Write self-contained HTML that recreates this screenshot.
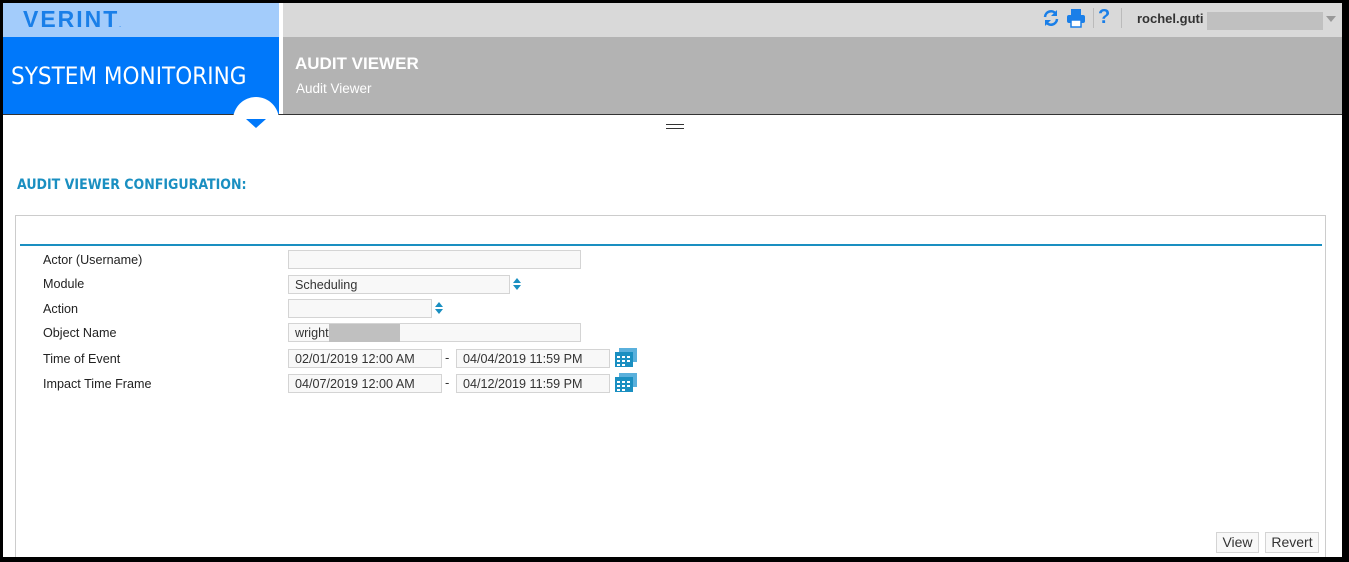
<!DOCTYPE html>
<html><head><style>
*{margin:0;padding:0;box-sizing:border-box}
body{width:1349px;height:562px;background:#000;position:relative;overflow:hidden;font-family:"Liberation Sans",Arial,sans-serif}
.a{position:absolute}
.inp{position:absolute;background:#f8f8f8;border:1px solid #d4d4d4;font-size:12.6px;color:#333;padding:2px 6px;height:19px;line-height:14px}
.lbl{position:absolute;left:43px;font-size:12.6px;color:#222}
.spin{position:absolute;width:10px;height:14px}
.btn{position:absolute;background:#f8f8f8;border:1px solid #d4d4d4;font-size:14px;color:#333;height:21px;line-height:19px;text-align:center}
</style></head><body>
<div class="a" style="left:3px;top:3px;width:1339px;height:554px;background:#fff"></div>
<div class="a" style="left:3px;top:3px;width:276px;height:34px;background:#a3ccfb"></div>
<div class="a" style="left:23px;top:6px;font-size:23px;font-weight:bold;color:#1a7fe8;letter-spacing:2px">VERINT<span style="font-size:5px">.</span></div>
<div class="a" style="left:3px;top:37px;width:276px;height:77px;background:#0078fa"></div>
<div class="a" style="left:11px;top:62px;font-size:24px;color:#fff;font-family:'DejaVu Sans Condensed','DejaVu Sans',sans-serif">SYSTEM MONITORING</div>
<div class="a" style="left:283px;top:3px;width:1059px;height:34px;background:#d9d9d9"></div>
<div class="a" style="left:283px;top:37px;width:1059px;height:77px;background:#b3b3b3"></div>
<div class="a" style="left:3px;top:114px;width:1339px;height:1px;background:#333"></div>
<div class="a" style="left:295px;top:54px;font-size:17px;font-weight:bold;color:#fff">AUDIT VIEWER</div>
<div class="a" style="left:296px;top:81px;font-size:13.5px;color:#fff">Audit Viewer</div>
<div class="a" style="left:233px;top:97px;width:46px;height:46px;border-radius:50%;background:#fff"></div>
<div class="a" style="left:246px;top:119px;width:0;height:0;border-left:10px solid transparent;border-right:10px solid transparent;border-top:9px solid #0078fa"></div>
<div class="a" style="left:666px;top:124px;width:18px;height:1px;background:#333"></div>
<div class="a" style="left:666px;top:128px;width:18px;height:1px;background:#333"></div>
<svg class="a" style="left:1042px;top:9px" width="18" height="18" viewBox="0 0 18 18"><path d="M3 8a6 6 0 0 1 11-3" stroke="#1a7fe8" stroke-width="2.5" fill="none"/><path d="M15 1v6h-6z" fill="#1a7fe8"/><path d="M15 10a6 6 0 0 1-11 3" stroke="#1a7fe8" stroke-width="2.5" fill="none"/><path d="M3 17v-6h6z" fill="#1a7fe8"/></svg>
<svg class="a" style="left:1066px;top:8px" width="20" height="20" viewBox="0 0 20 20"><rect x="5" y="1" width="10" height="6" fill="#1a7fe8"/><rect x="1" y="7" width="18" height="8" rx="2" fill="#1a7fe8"/><rect x="5" y="12" width="10" height="7" fill="#fff" stroke="#1a7fe8" stroke-width="1.5"/></svg>
<div class="a" style="left:1093px;top:8px;width:1px;height:20px;background:#bbb"></div>
<div class="a" style="left:1098px;top:6px;font-size:20px;font-weight:bold;color:#1a7fe8">?</div>
<div class="a" style="left:1121px;top:8px;width:1px;height:20px;background:#bbb"></div>
<div class="a" style="left:1137px;top:11px;font-size:13px;font-weight:bold;color:#333">rochel.guti</div>
<div class="a" style="left:1207px;top:12px;width:116px;height:18px;background:#c0c0c0"></div>
<div class="a" style="left:1326px;top:16px;border-left:5px solid transparent;border-right:5px solid transparent;border-top:6px solid #999"></div>
<div class="a" style="left:17px;top:177px;font-size:14px;font-weight:bold;color:#1a8fc1;font-family:'DejaVu Sans Condensed','DejaVu Sans',sans-serif">AUDIT VIEWER CONFIGURATION:</div>
<div class="a" style="left:15px;top:215px;width:1311px;height:342px;border:1px solid #ccc;border-bottom:none;background:#fff"></div>
<div class="a" style="left:20px;top:244px;width:1302px;height:2px;background:#1a8fc1"></div>
<div class="lbl" style="top:253px">Actor (Username)</div>
<div class="lbl" style="top:277px">Module</div>
<div class="lbl" style="top:302px">Action</div>
<div class="lbl" style="top:326px">Object Name</div>
<div class="lbl" style="top:352px">Time of Event</div>
<div class="lbl" style="top:377px">Impact Time Frame</div>
<div class="inp" style="left:288px;top:250px;width:293px"></div>
<div class="inp" style="left:288px;top:275px;width:222px">Scheduling</div>
<svg class="spin" style="left:512px;top:277px" viewBox="0 0 10 14"><path d="M1 6L5 1L9 6Z M1 8L5 13L9 8Z" fill="#1a8fc1"/></svg>
<div class="inp" style="left:288px;top:299px;width:144px"></div>
<svg class="spin" style="left:434px;top:301px" viewBox="0 0 10 14"><path d="M1 6L5 1L9 6Z M1 8L5 13L9 8Z" fill="#1a8fc1"/></svg>
<div class="inp" style="left:288px;top:323px;width:293px">wright</div>
<div class="a" style="left:329px;top:324px;width:71px;height:18px;background:#c0c0c0"></div>
<div class="inp" style="left:288px;top:349px;width:154px">02/01/2019 12:00 AM</div>
<div class="a" style="left:445px;top:350px;font-size:13px;color:#333">-</div>
<div class="inp" style="left:456px;top:349px;width:154px">04/04/2019 11:59 PM</div>
<div class="inp" style="left:288px;top:374px;width:154px">04/07/2019 12:00 AM</div>
<div class="a" style="left:445px;top:375px;font-size:13px;color:#333">-</div>
<div class="inp" style="left:456px;top:374px;width:154px">04/12/2019 11:59 PM</div>
<svg class="a" style="left:614px;top:348px" width="24" height="20" viewBox="0 0 24 20"><rect x="5" y="0" width="18" height="14" fill="#5ab0dc"/><rect x="1" y="4" width="18" height="15" fill="#1a8fc1"/><g fill="#fff"><rect x="3" y="8" width="3" height="2"/><rect x="8" y="8" width="3" height="2"/><rect x="13" y="8" width="3" height="2"/><rect x="3" y="12" width="3" height="2"/><rect x="8" y="12" width="3" height="2"/><rect x="13" y="12" width="3" height="2"/><rect x="3" y="16" width="3" height="2"/><rect x="8" y="16" width="3" height="2"/></g></svg>
<svg class="a" style="left:614px;top:373px" width="24" height="20" viewBox="0 0 24 20"><rect x="5" y="0" width="18" height="14" fill="#5ab0dc"/><rect x="1" y="4" width="18" height="15" fill="#1a8fc1"/><g fill="#fff"><rect x="3" y="8" width="3" height="2"/><rect x="8" y="8" width="3" height="2"/><rect x="13" y="8" width="3" height="2"/><rect x="3" y="12" width="3" height="2"/><rect x="8" y="12" width="3" height="2"/><rect x="13" y="12" width="3" height="2"/><rect x="3" y="16" width="3" height="2"/><rect x="8" y="16" width="3" height="2"/></g></svg>
<div class="btn" style="left:1216px;top:532px;width:43px">View</div>
<div class="btn" style="left:1265px;top:532px;width:54px">Revert</div>
</body></html>
